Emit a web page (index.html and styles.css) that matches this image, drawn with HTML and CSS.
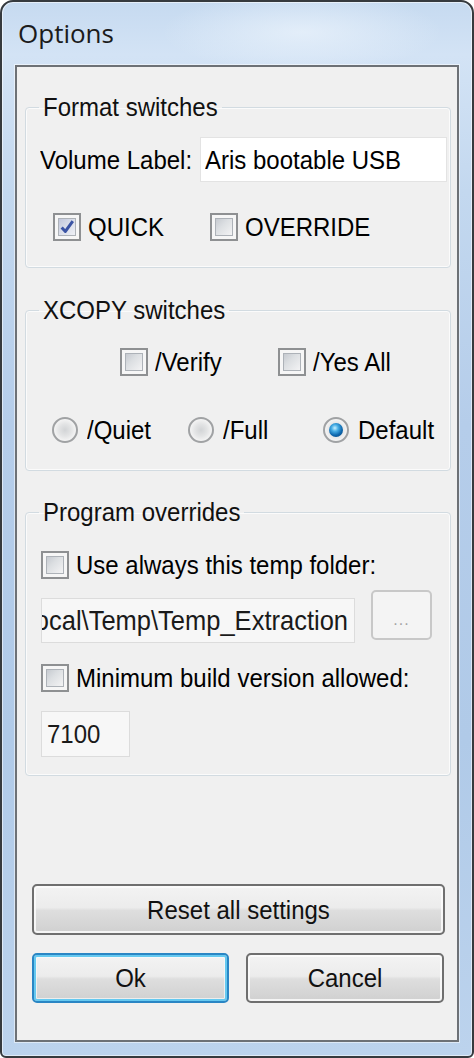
FILE: index.html
```html
<!DOCTYPE html>
<html lang="en">
<head>
<meta charset="utf-8">
<title>Options</title>
<link rel="stylesheet" href="styles.css">
</head>
<body>
<div class="window">
  <div class="titlebar"><span class="title">Options</span></div>
  <div class="client">

    <fieldset class="group g1">
      <legend><span class="tall">Format switches</span></legend>
      <div class="gbody">
        <div class="row vol">
          <span class="vol-label tall">Volume Label:</span>
          <div class="textbox white"><span class="tall">Aris bootable USB</span></div>
        </div>
        <div class="row checks1">
          <div class="opt w157">
            <span class="cb checked"><span class="cb-in"><svg viewBox="0 0 18 18" width="18" height="18"><path d="M3 9.5 L7.2 14 L15.5 2.5" fill="none" stroke="#3b54a4" stroke-width="3.4" stroke-linejoin="round"/></svg></span></span>
            <span class="txt tall">QUICK</span>
          </div>
          <div class="opt">
            <span class="cb"><span class="cb-in"></span></span>
            <span class="txt tall">OVERRIDE</span>
          </div>
        </div>
      </div>
    </fieldset>

    <fieldset class="group g2">
      <legend><span class="tall">XCOPY switches</span></legend>
      <div class="gbody">
        <div class="row checks2">
          <div class="opt w158">
            <span class="cb"><span class="cb-in"></span></span>
            <span class="txt tall">/Verify</span>
          </div>
          <div class="opt">
            <span class="cb"><span class="cb-in"></span></span>
            <span class="txt tall">/Yes All</span>
          </div>
        </div>
        <div class="row radios">
          <div class="opt r w136">
            <span class="rb"></span>
            <span class="txt tall">/Quiet</span>
          </div>
          <div class="opt r w135">
            <span class="rb"></span>
            <span class="txt tall">/Full</span>
          </div>
          <div class="opt r">
            <span class="rb on"><span class="dot"></span></span>
            <span class="txt tall">Default</span>
          </div>
        </div>
      </div>
    </fieldset>

    <fieldset class="group g3">
      <legend><span class="tall">Program overrides</span></legend>
      <div class="gbody">
        <div class="row po1">
          <div class="opt">
            <span class="cb"><span class="cb-in"></span></span>
            <span class="txt tall">Use always this temp folder:</span>
          </div>
        </div>
        <div class="row temp">
          <div class="textbox grey path"><span class="tall">C:\Users\Aris\AppData\Local\Temp\Temp_Extraction</span></div>
          <div class="browse">...</div>
        </div>
        <div class="row po2">
          <div class="opt">
            <span class="cb"><span class="cb-in"></span></span>
            <span class="txt tall">Minimum build version allowed:</span>
          </div>
        </div>
        <div class="row build">
          <div class="textbox grey num"><span class="tall">7100</span></div>
        </div>
      </div>
    </fieldset>

    <div class="buttons">
      <div class="btn reset"><span class="tall">Reset all settings</span></div>
      <div class="btn-row">
        <div class="btn ok"><span class="tall">Ok</span></div>
        <div class="btn"><span class="tall">Cancel</span></div>
      </div>
    </div>

  </div>
</div>
</body>
</html>
```

FILE: styles.css
```css
html, body {
  margin: 0;
  padding: 0;
  background: #ffffff;
}

.window {
  width: 474px;
  height: 1058px;
  box-sizing: border-box;
  border: 2px solid #363a3e;
  border-radius: 13px 13px 6px 6px;
  background:
    radial-gradient(ellipse 140px 40px at 300px 30px, rgba(236,244,252,0.7), rgba(236,244,252,0) 100%),
    linear-gradient(180deg, #c6daf0 0%, #d3e3f5 5%, #c3d8ef 18%, #b5cdea 40%, #b0cae8 70%, #bcd3ed 100%);
  box-shadow: inset 0 0 0 1px rgba(255,255,255,0.55);
  display: flex;
  flex-direction: column;
  padding: 0 13px 14px 13px;
  font-family: "Liberation Sans", Arial, sans-serif;
  font-size: 24px;
  color: #000;
}

.tall {
  display: inline-block;
  transform: scaleY(1.1);
}

.titlebar {
  height: 63px;
  display: flex;
  align-items: center;
  padding-left: 3px;
  flex: none;
}

.title {
  font-family: "Open Sans", "Noto Sans", sans-serif;
  font-size: 26px;
  color: #1b1b1b;
  margin-top: -2px;
}

.client {
  flex: 1;
  display: flex;
  flex-direction: column;
  background: #f0f0f0;
  border: 2px solid #6d7176;
  box-shadow: 0 0 0 1px rgba(255,255,255,0.5);
}

/* Group boxes */
.group {
  margin: 0 6px 0 8px;
  padding: 0;
  border: 1px solid #d2dbe1;
  border-radius: 4px;
  box-shadow: inset 0 0 0 1px #fbfbfb;
  min-inline-size: 0;
}

.group legend {
  margin-left: 13px;
  padding: 0 4px;
  line-height: 28px;
  height: 28px;
  color: #111;
}

.g1 { margin-top: 26px; }
.g2 { margin-top: 28px; }
.g3 { margin-top: 27px; }

.gbody {
  display: flex;
  flex-direction: column;
}

.row {
  display: flex;
  align-items: center;
}

/* Group 1 */
.g1 .gbody { padding: 16px 3px 26px 0; }
.vol { height: 45px; padding-left: 14px; }
.vol-label { width: 160px; flex: none; }
.checks1 { margin-top: 31px; padding-left: 27px; height: 28px; }

/* Group 2 */
.g2 .gbody { padding: 24px 0 27px 0; }
.checks2 { padding-left: 94px; height: 28px; }
.radios { margin-top: 41px; padding-left: 26px; height: 26px; }

/* Group 3 */
.g3 .gbody { padding: 25px 0 18px 0; }
.po1 { padding-left: 15px; height: 28px; }
.temp { margin-top: 11px; padding-left: 15px; align-items: flex-start; height: 53px; }
.po2 { margin-top: 21px; padding-left: 15px; height: 28px; }
.build { margin-top: 19px; padding-left: 15px; }

/* Options (checkbox / radio + label) */
.opt {
  display: flex;
  align-items: center;
  flex: none;
  white-space: nowrap;
}
.opt .txt { margin-left: 7px; }
.opt.r .txt { margin-left: 9px; }
.w157 { width: 157px; }
.w158 { width: 158px; }
.w136 { width: 136px; }
.w135 { width: 135px; }

.cb {
  flex: none;
  width: 28px;
  height: 28px;
  box-sizing: border-box;
  border: 2px solid #8e9092;
  padding: 3px;
  background: #f6f6f6;
}

.cb-in {
  display: flex;
  align-items: center;
  justify-content: center;
  width: 100%;
  height: 100%;
  box-sizing: border-box;
  border: 1px solid #adb2b8;
  background: linear-gradient(135deg, #c6cad0 0%, #dcdfe2 40%, #f3f3f4 100%);
}

.cb.checked .cb-in {
  background: linear-gradient(135deg, #c2c8dc 0%, #d9dde9 45%, #eef0f5 100%);
}

.cb-in svg { display: block; }

.rb {
  flex: none;
  width: 26px;
  height: 26px;
  box-sizing: border-box;
  border-radius: 50%;
  border: 2px solid #a0a2a4;
  background: radial-gradient(circle at 50% 50%, #d2d4d6 0%, #e3e4e5 40%, #f4f4f4 70%, #fbfbfb 100%);
  display: flex;
  align-items: center;
  justify-content: center;
}

.rb .dot {
  width: 14px;
  height: 14px;
  border-radius: 50%;
  background: radial-gradient(circle at 42% 36%, #c8f1ff 0%, #45ace4 28%, #0d67ad 60%, #0a3f76 100%);
}

/* Text boxes */
.textbox {
  box-sizing: border-box;
  height: 45px;
  display: flex;
  align-items: center;
  overflow: hidden;
  white-space: nowrap;
}

.textbox.white {
  flex: 1;
  background: #ffffff;
  border: 1px solid #e3e3e3;
  padding-left: 4px;
}

.textbox.grey {
  background: #f7f7f7;
  border: 1px solid #dcdcdc;
  color: #1a1a1a;
}

.path {
  width: 314px;
  margin-top: 8px;
  justify-content: flex-end;
  padding-right: 6px;
  font-size: 25.5px;
}

.path span { flex: none; }

.num {
  width: 89px;
  padding-left: 5px;
  height: 46px;
  color: #2a2a2a;
}

.browse {
  width: 61px;
  height: 50px;
  margin-left: 16px;
  box-sizing: border-box;
  border: 2px solid #c8c8c8;
  border-radius: 5px;
  background: #f4f4f4;
  color: #a4a4a4;
  font-size: 16px;
  display: flex;
  justify-content: center;
  align-items: center;
  padding-top: 10px;
  letter-spacing: 1px;
}

/* Buttons */
.buttons {
  margin-top: auto;
  padding: 0 12px 37px 15px;
  display: flex;
  flex-direction: column;
  gap: 18px;
}

.btn-row {
  display: grid;
  grid-template-columns: 197px 198px;
  gap: 17px;
}

.btn {
  height: 51px;
  box-sizing: border-box;
  border: 2px solid #6f6f6f;
  border-radius: 5px;
  background: linear-gradient(180deg, #f3f3f3 0%, #ececec 46%, #dedede 52%, #d0d0d0 100%);
  box-shadow: inset 0 0 0 2px rgba(252,252,252,0.85);
  display: flex;
  align-items: center;
  justify-content: center;
  color: #111;
}

.btn-row .btn { height: 50px; }

.btn.ok {
  border-color: #2a86c4;
  box-shadow: inset 0 0 0 2px #66c9f0, inset 0 0 0 3px rgba(250,250,250,0.7);
}
```
